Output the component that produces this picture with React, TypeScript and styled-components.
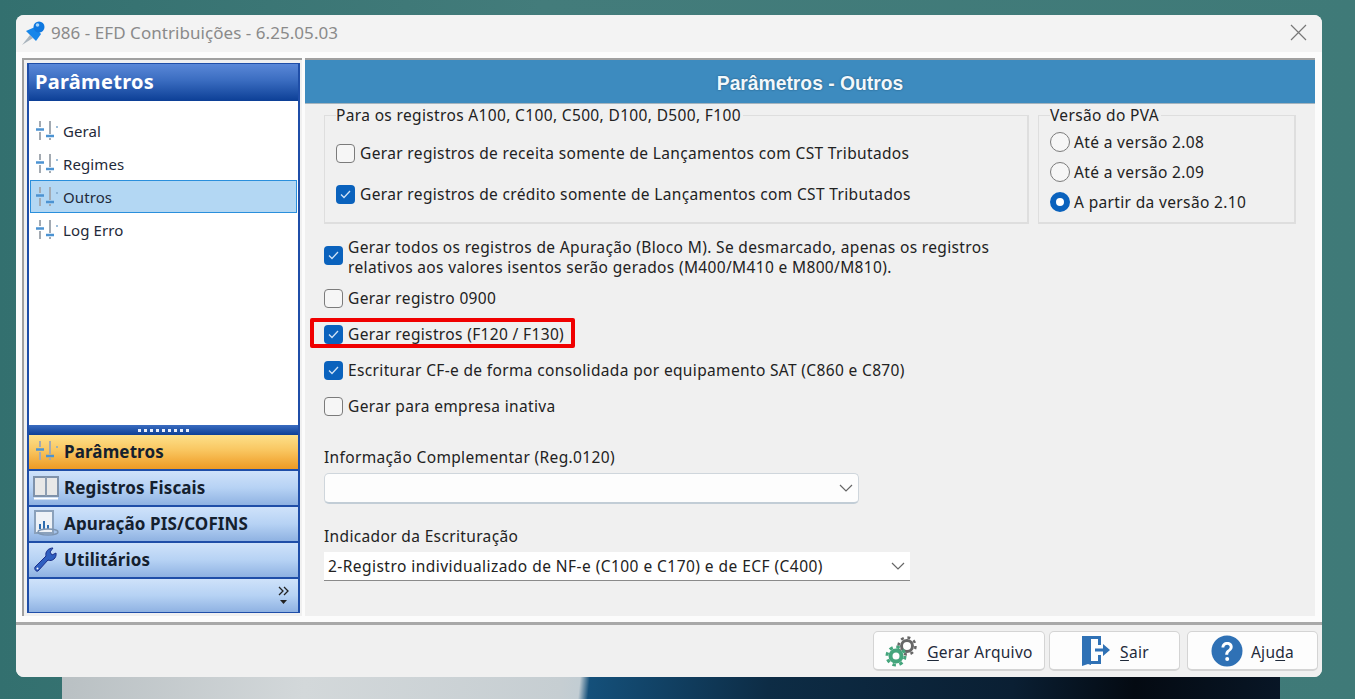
import styled, { createGlobalStyle } from 'styled-components';

const GlobalStyle = createGlobalStyle`
  html, body {
    margin: 0;
    height: 100%;
    overflow: hidden;
    background: #3f7a78;
  }

  * {
    box-sizing: border-box;
  }

  #root {
    font-family: "Noto Sans", "Open Sans", sans-serif;
    font-size: 15.500px;
    letter-spacing: 0.35px;
    color: #222;
  }
`;

const Desktop = styled.div`
  position: relative;
  width: 1355px;
  height: 699px;
  padding: 15px 33px 22px 16px;
  background: linear-gradient(90deg, #33706f 0, #437c7b 40%, #3f7a78 100%);
`;

const Wallpaper = styled.div`
  position: absolute;
  left: 62px;
  top: 670px;
  width: 1218px;
  height: 29px;
  background: linear-gradient(
    96deg,
    #b9c0c3 0,
    #d3d8da 20%,
    #c6ced2 41%,
    #c2cdd3 42.500%,
    #14507a 43.300%,
    #0d2c45 58%,
    #0a1f33 78%,
    #040a12 88%,
    #081626 100%
  );
`;

const Window = styled.div`
  position: relative;
  display: flex;
  flex-direction: column;
  height: 662px;
  border-radius: 8px;
  overflow: hidden;
  background: #f0f0f0;
`;

const TitleBar = styled.div`
  display: flex;
  align-items: center;
  height: 37px;
  padding: 0 15px 2px 5px;
  background: #f3f3f3;
  color: #8a8a8a;
  font-size: 17px;
  letter-spacing: 0.05px;
`;

const TitleText = styled.span`
  margin-left: 4px;
  flex: 1;
`;

const Body = styled.div`
  flex: 1;
  display: flex;
  gap: 3px;
  padding: 6px 7px 6px 6px;
  background: #fcfcfc;
  min-height: 0;
`;

const Sidebar = styled.div`
  width: 283px;
  display: flex;
  flex-direction: column;
  padding: 3px 2px 3px 3px;
  background: #f0f0f0;
  border-top: 2px solid #a0a0a0;
  border-left: 2px solid #a0a0a0;
`;

const SideFrame = styled.div`
  flex: 1;
  display: flex;
  flex-direction: column;
  border: 2px solid #1f4ea8;
  border-top-width: 1px;
  border-bottom-width: 1px;
`;

const SideHeader = styled.div`
  height: 37px;
  flex: none;
  padding: 0 0 2px 6px;
  display: flex;
  align-items: center;
  background: linear-gradient(180deg, #5a88d8 0, #3a6cc0 45%, #0c3f96 100%);
  color: #fff;
  font-size: 20px;
  letter-spacing: 0.3px;
  font-weight: 700;
`;

const SideList = styled.div`
  flex: 1;
  padding-top: 13px;
  background: #fff;
`;

const SideItem = styled.div<{ $active?: boolean }>`
  display: flex;
  align-items: center;
  gap: 5px;
  height: 33px;
  margin: 0 1px;
  padding-left: 4px;
  font-size: 15px;
  letter-spacing: 0.1px;
  color: #1f2a3a;
  background: ${(p) => (p.$active ? '#b3d7f3' : 'transparent')};
  border: 1px solid ${(p) => (p.$active ? '#2a8fdc' : 'transparent')};
`;

const Splitter = styled.div`
  height: 10px;
  flex: none;
  display: flex;
  align-items: center;
  justify-content: center;
  gap: 3px;
  background: linear-gradient(180deg, #3a6cc0, #0c3f96);

  i {
    width: 3px;
    height: 3px;
    background: #e8eefc;
  }
`;

const NavButton = styled.div<{ $active?: boolean }>`
  height: 36px;
  flex: none;
  display: flex;
  align-items: center;
  gap: 5px;
  padding: 0 0 2px 4px;
  font-size: 17px;
  letter-spacing: 0.12px;
  font-weight: 700;
  color: #14202e;
  border-bottom: 2px solid #1f4ea8;
  background: ${(p) =>
    p.$active
      ? 'linear-gradient(180deg, #fde08a 0, #f9c660 45%, #ee9a24 100%)'
      : 'linear-gradient(180deg, #cfe2fa 0, #b6d2f4 50%, #8fb2e2 100%)'};
`;

const NavIcon = styled.span`
  width: 26px;
  display: flex;
  justify-content: center;
`;

const NavFooter = styled.div`
  height: 33px;
  flex: none;
  display: flex;
  align-items: center;
  justify-content: flex-end;
  padding-right: 9px;
  background: linear-gradient(180deg, #cfe2fa 0, #b6d2f4 50%, #8fb2e2 100%);
`;

const Main = styled.div`
  flex: 1;
  display: flex;
  flex-direction: column;
  background: #f0f0f0;
  border-top: 2px solid #a0a0a0;
`;

const MainHeader = styled.div`
  height: 44px;
  flex: none;
  display: flex;
  align-items: center;
  justify-content: center;
  padding-top: 4px;
  background: #3d8bbf;
  border-bottom: 1px solid #a5b4be;
  color: #f2f8fc;
  font-family: "Liberation Sans", Arial, sans-serif;
  font-size: 19.300px;
  letter-spacing: 0;
  font-weight: 700;
  text-shadow: 0 0 2px #1d4f73;
`;

const MainContent = styled.div`
  flex: 1;
  padding: 2px 19px 0;
`;

const Groups = styled.div`
  display: flex;
  gap: 9px;
  height: 116px;
`;

const Group = styled.fieldset<{ $width: number }>`
  width: ${(p) => p.$width}px;
  height: 118px;
  margin: 0;
  padding: 0 11px;
  border: solid #dedede;
  border-width: 1px 2px 2px 1px;

  legend {
    padding: 0 2px 0 0;
    line-height: 19px;
  }
`;

const CheckRows = styled.div`
  display: flex;
  flex-direction: column;
  gap: 21px;
  padding-top: 18px;
`;

const RadioRows = styled.div`
  display: flex;
  flex-direction: column;
  gap: 10px;
  padding-top: 7px;
`;

const Row = styled.div`
  position: relative;
  display: flex;
  align-items: center;
  gap: 5px;
  height: 20px;
  line-height: 20px;
`;

const WrapRow = styled(Row)`
  height: 40px;
  margin-bottom: -5px;

  > span:first-child {
    margin-top: -4px;
  }
`;

const Box = styled.span<{ $checked?: boolean }>`
  flex: none;
  width: 19px;
  height: 19px;
  display: flex;
  align-items: center;
  justify-content: center;
  border-radius: 4px;
  background: ${(p) => (p.$checked ? '#0a62bd' : '#f6f6f6')};
  border: ${(p) => (p.$checked ? '0' : '1.5px solid #7b7b7b')};
`;

const Radio = styled.span<{ $checked?: boolean }>`
  flex: none;
  width: 20px;
  height: 20px;
  margin-right: -1px;
  border-radius: 50%;
  background: ${(p) => (p.$checked ? '#fff' : '#f6f6f6')};
  border: ${(p) => (p.$checked ? '6px solid #0a62bd' : '1.5px solid #7b7b7b')};
`;

const Options = styled.div`
  display: flex;
  flex-direction: column;
  padding-top: 15px;
  gap: 16px;
`;

const Highlight = styled.div`
  position: absolute;
  left: -14px;
  top: -6px;
  width: 265px;
  height: 30px;
  border: 4px solid #f00000;
  border-radius: 2px;
`;

const FieldLabel = styled.div`
  line-height: 20px;
`;

const Field = styled.div<{ $top: number }>`
  margin-top: ${(p) => p.$top}px;
`;

const Combo = styled.div<{ $width: number; $flat?: boolean }>`
  display: flex;
  align-items: center;
  justify-content: space-between;
  width: ${(p) => p.$width}px;
  height: ${(p) => (p.$flat ? 29 : 31)}px;
  margin-top: 6px;
  padding: 0 4px;
  letter-spacing: 0.45px;
  background: ${(p) => (p.$flat ? '#fff' : '#fdfdfd')};
  border: ${(p) => (p.$flat ? '0' : '1px solid #cfd6dc')};
  border-bottom: ${(p) => (p.$flat ? '1px solid #8a8a8a' : '2px solid #c2cdd6')};
  border-radius: ${(p) => (p.$flat ? 0 : 5)}px;
`;

const Footer = styled.div`
  height: 55px;
  flex: none;
  display: flex;
  justify-content: flex-end;
  gap: 4px;
  padding: 6px 4px 6px 0;
  background: #f0f0f0;
  border-top: 3px solid #a8a8a8;
`;

const ActionButton = styled.div<{ $width: number; $gapAfter?: number }>`
  width: ${(p) => p.$width}px;
  height: 40px;
  margin-right: ${(p) => p.$gapAfter ?? 0}px;
  display: flex;
  align-items: center;
  justify-content: center;
  gap: 8px;
  background: #fdfdfd;
  border: 1px solid #d4d4d4;
  border-bottom-width: 2px;
  border-radius: 5px;
  color: #1f2a3a;
  letter-spacing: 0.3px;

  u {
    text-underline-offset: 2px;
  }

  > span {
    padding-top: 2px;
  }
`;

const Sliders = () => (
  <svg width="23" height="22" viewBox="0 0 23 22" fill="none">
    <path d="M5 1v6M5 12v8M15 1v13M15 18v2" stroke="#a3aab2" strokeWidth="2" />
    <path d="M1 9.500h8M11 16h8" stroke="#4c93d2" strokeWidth="2.500" />
    <path d="M22 6v2" stroke="#7fa8cc" strokeWidth="1.500" />
  </svg>
);

const Pin = () => (
  <svg width="26" height="26" viewBox="0 0 26 26">
    <path d="M1 25L9 15l3 3z" fill="#a9b4bd" />
    <path d="M5 11l9-4 6 7-5 7z" fill="#1686ea" />
    <circle cx="18" cy="7" r="5.500" fill="#0f78e0" />
    <circle cx="16.500" cy="5" r="1.800" fill="#a5d5fb" />
  </svg>
);

const Book = () => (
  <svg width="26" height="26" viewBox="0 0 26 26" fill="none">
    <rect x="1" y="3" width="24" height="19" fill="#e8e8e8" stroke="#7f92ab" strokeWidth="2" />
    <path d="M13 3v19" stroke="#8c9db2" strokeWidth="2" />
    <path d="M1 24.500h24" stroke="#fff" strokeWidth="2" />
  </svg>
);

const Report = () => (
  <svg width="26" height="28" viewBox="0 0 26 28" fill="none">
    <rect x="2" y="2" width="18" height="22" fill="#eef2f7" stroke="#8ba1bb" strokeWidth="2" />
    <path d="M7 20v-5M11 20v-8M15 20v-4" stroke="#2d6cb0" strokeWidth="2" />
    <ellipse cx="15" cy="23" rx="10" ry="3" fill="none" stroke="#7d95b2" strokeWidth="1.500" />
  </svg>
);

const Wrench = () => (
  <svg width="26" height="26" viewBox="0 0 26 26">
    <path
      d="M2 21l11-11c-1-4 2-8 7-8l-3 4 2 3 4-2c1 5-4 9-8 7L5 25c-2 1-4-2-3-4z"
      fill="#2f5fc0"
      stroke="#1c2f8a"
    />
    <circle cx="4.500" cy="22.500" r="1" fill="#fff" />
  </svg>
);

const Gears = () => (
  <svg width="34" height="32" viewBox="0 0 34 32" fill="none">
    <circle cx="22" cy="11" r="5.500" stroke="#666" strokeWidth="3" />
    <circle cx="22" cy="11" r="8.500" stroke="#666" strokeWidth="2.500" strokeDasharray="3 3.700" />
    <circle cx="11" cy="21" r="5.500" stroke="#44a57c" strokeWidth="4" fill="#fdfdfd" />
    <circle cx="11" cy="21" r="9" stroke="#44a57c" strokeWidth="3" strokeDasharray="3.500 3.570" />
  </svg>
);

const Door = () => (
  <svg width="32" height="32" viewBox="0 0 32 32">
    <path d="M2 1h19v9h-3V4h-7v22h7v-6h3v9H11v-1l-9 3z" fill="#2f71b5" />
    <path d="M2 1l9 3v26l-9-3z" fill="#2f71b5" />
    <path d="M15 13.500h8V9l7 6-7 6v-4.500h-8z" fill="#2f71b5" />
  </svg>
);

const Help = () => (
  <svg width="32" height="32" viewBox="0 0 32 32">
    <circle cx="16" cy="16" r="15.500" fill="#2f71b5" />
    <path
      d="M10.500 12.500c0-3.500 2.500-5.500 5.700-5.500s5.500 2 5.500 4.800c0 4.200-4.500 4.200-4.500 8h-3c0-5 4.500-5 4.500-7.800 0-1.200-1-2.200-2.500-2.200-1.700 0-2.700 1-2.900 2.700z"
      fill="#fff"
    />
    <circle cx="16.200" cy="24" r="2" fill="#fff" />
  </svg>
);

const Check = () => (
  <svg width="11" height="9" viewBox="0 0 11 9" fill="none">
    <path d="M1 4.500l3 3 6-6.500" stroke="#cfe2f6" strokeWidth="1.300" />
  </svg>
);

const Chevron = () => (
  <svg width="16" height="10" viewBox="0 0 16 10" fill="none">
    <path d="M2 2l6 6 6-6" stroke="#666" strokeWidth="1.200" />
  </svg>
);

const CheckRow = ({ checked, children }: { checked?: boolean; children: React.ReactNode }) => (
  <Row>
    <Box $checked={checked}>{checked && <Check />}</Box>
    <span>{children}</span>
  </Row>
);

const RadioRow = ({ checked, children }: { checked?: boolean; children: React.ReactNode }) => (
  <Row>
    <Radio $checked={checked} />
    <span>{children}</span>
  </Row>
);

const menuItems = ['Geral', 'Regimes', 'Outros', 'Log Erro'];

export default function App() {
  return (
    <>
      <GlobalStyle />
      <Desktop>
        <Wallpaper />
        <Window>
          <TitleBar>
            <Pin />
            <TitleText>986 - EFD Contribuições - 6.25.05.03</TitleText>
            <svg width="17" height="17" viewBox="0 0 17 17" fill="none">
              <path d="M1 1l15 15M16 1L1 16" stroke="#777" strokeWidth="1.200" />
            </svg>
          </TitleBar>
          <Body>
            <Sidebar>
              <SideFrame>
                <SideHeader>Parâmetros</SideHeader>
                <SideList>
                  {menuItems.map((item) => (
                    <SideItem key={item} $active={item === 'Outros'}>
                      <Sliders />
                      {item}
                    </SideItem>
                  ))}
                </SideList>
                <Splitter>
                  {Array.from({ length: 9 }).map((_, i) => (
                    <i key={i} />
                  ))}
                </Splitter>
                <NavButton $active>
                  <NavIcon>
                    <Sliders />
                  </NavIcon>
                  Parâmetros
                </NavButton>
                <NavButton>
                  <NavIcon>
                    <Book />
                  </NavIcon>
                  Registros Fiscais
                </NavButton>
                <NavButton>
                  <NavIcon>
                    <Report />
                  </NavIcon>
                  Apuração PIS/COFINS
                </NavButton>
                <NavButton>
                  <NavIcon>
                    <Wrench />
                  </NavIcon>
                  Utilitários
                </NavButton>
                <NavFooter>
                  <svg width="11" height="20" viewBox="0 0 11 20" fill="none">
                    <path d="M1 1l4 4-4 4M6 1l4 4-4 4" stroke="#222" strokeWidth="1.300" />
                    <path d="M2 14h7l-3.500 4z" fill="#222" />
                  </svg>
                </NavFooter>
              </SideFrame>
            </Sidebar>
            <Main>
              <MainHeader>Parâmetros - Outros</MainHeader>
              <MainContent>
                <Groups>
                  <Group $width={705}>
                    <legend>Para os registros A100, C100, C500, D100, D500, F100</legend>
                    <CheckRows>
                      <CheckRow>Gerar registros de receita somente de Lançamentos com CST Tributados</CheckRow>
                      <CheckRow checked>Gerar registros de crédito somente de Lançamentos com CST Tributados</CheckRow>
                    </CheckRows>
                  </Group>
                  <Group $width={258}>
                    <legend>Versão do PVA</legend>
                    <RadioRows>
                      <RadioRow>Até a versão 2.08</RadioRow>
                      <RadioRow>Até a versão 2.09</RadioRow>
                      <RadioRow checked>A partir da versão 2.10</RadioRow>
                    </RadioRows>
                  </Group>
                </Groups>
                <Options>
                  <WrapRow>
                    <Box $checked>
                      <Check />
                    </Box>
                    <span>
                      Gerar todos os registros de Apuração (Bloco M). Se desmarcado, apenas os registros
                      <br />
                      relativos aos valores isentos serão gerados (M400/M410 e M800/M810).
                    </span>
                  </WrapRow>
                  <CheckRow>Gerar registro 0900</CheckRow>
                  <Row>
                    <Highlight />
                    <Box $checked>
                      <Check />
                    </Box>
                    <span>Gerar registros (F120 / F130)</span>
                  </Row>
                  <CheckRow checked>Escriturar CF-e de forma consolidada por equipamento SAT (C860 e C870)</CheckRow>
                  <CheckRow>Gerar para empresa inativa</CheckRow>
                </Options>
                <Field $top={31}>
                  <FieldLabel>Informação Complementar (Reg.0120)</FieldLabel>
                  <Combo $width={535}>
                    <span />
                    <Chevron />
                  </Combo>
                </Field>
                <Field $top={22}>
                  <FieldLabel>Indicador da Escrituração</FieldLabel>
                  <Combo $width={586} $flat>
                    <span>2-Registro individualizado de NF-e (C100 e C170) e de ECF (C400)</span>
                    <Chevron />
                  </Combo>
                </Field>
              </MainContent>
            </Main>
          </Body>
          <Footer>
            <ActionButton $width={172}>
              <Gears />
              <span>
                <u>G</u>erar Arquivo
              </span>
            </ActionButton>
            <ActionButton $width={131} $gapAfter={3}>
              <Door />
              <span>
                <u>S</u>air
              </span>
            </ActionButton>
            <ActionButton $width={131}>
              <Help />
              <span>
                Aju<u>d</u>a
              </span>
            </ActionButton>
          </Footer>
        </Window>
      </Desktop>
    </>
  );
}
